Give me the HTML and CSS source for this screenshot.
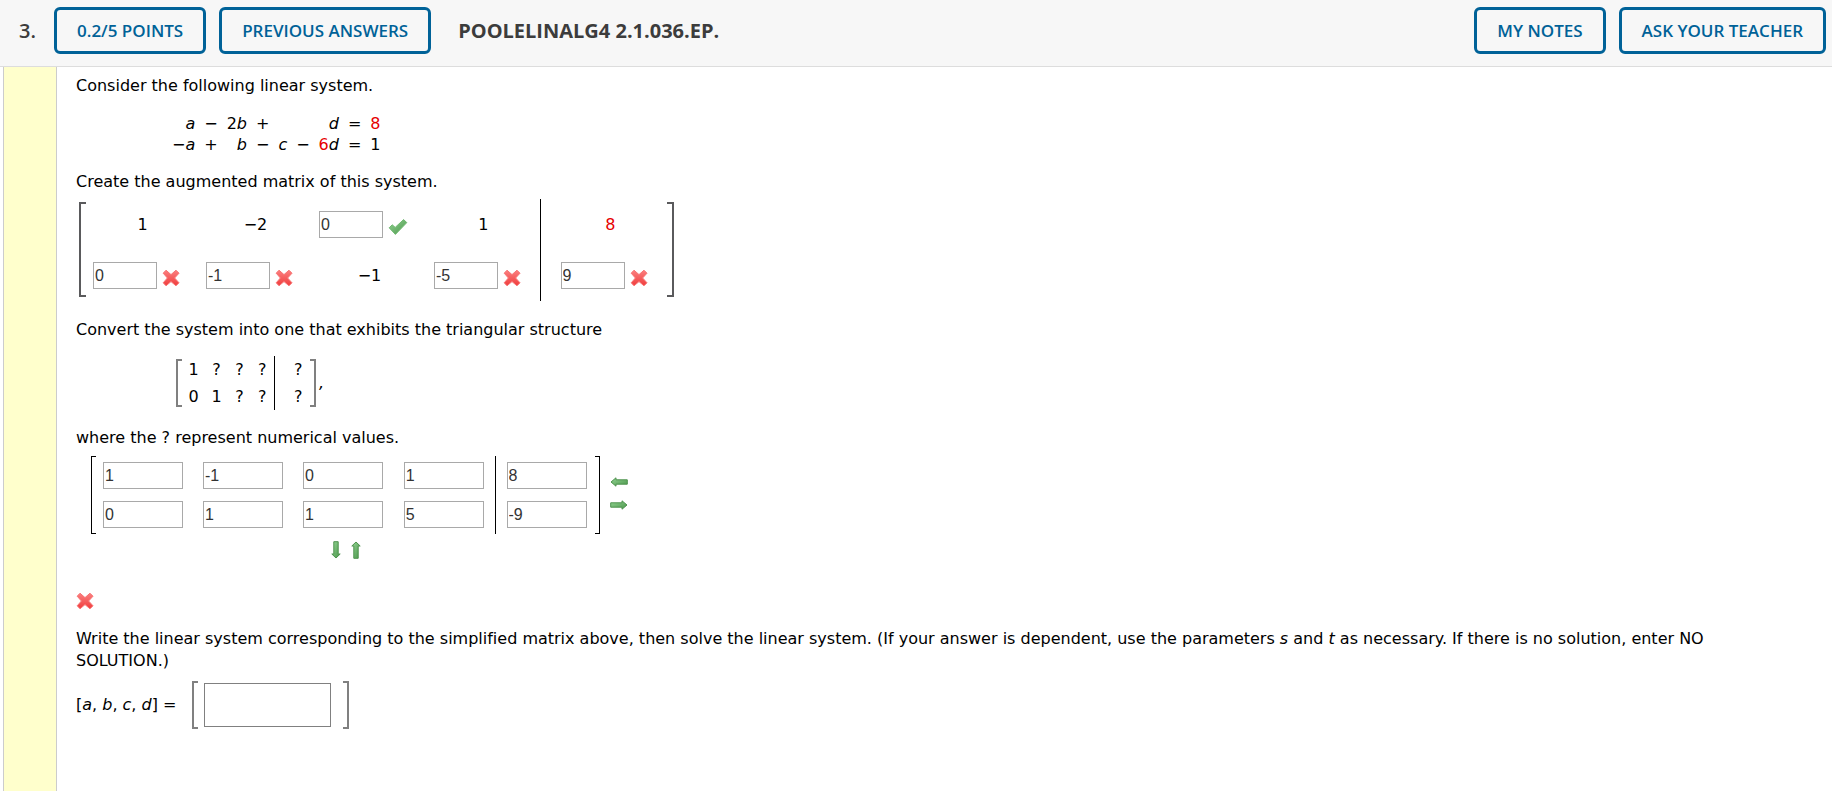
FILE: index.html
```html
<!DOCTYPE html>
<html lang="en">
<head>
    <meta charset="UTF-8">
    <meta name="viewport" content="width=device-width, initial-scale=1.0">
    <title>PooleLinAlg4 2.1.036.EP.</title>
    <link rel="stylesheet" href="styles.css">
</head>
<body>
    <svg class="defs" aria-hidden="true">
        <defs>
            <linearGradient id="red" x1="0" y1="0" x2="0" y2="1">
                <stop offset="0" stop-color="#fb8080"/>
                <stop offset="1" stop-color="#f03c3c"/>
            </linearGradient>
            <linearGradient id="green" x1="0" y1="0" x2="1" y2="1">
                <stop offset="0" stop-color="#93d393"/>
                <stop offset="1" stop-color="#4a964a"/>
            </linearGradient>
            <symbol id="cross" viewBox="0 0 18 18">
                <path d="M4 1.2 9 5.6 14 1.2 17 4.2 12.6 9 17 13.8 14 16.8 9 12.6 4 16.8 1.2 13.8 5.4 9 1.2 4.2Z" fill="url(#red)" stroke="#f87474" stroke-linejoin="round"/>
            </symbol>
            <symbol id="check" viewBox="0 0 20 18">
                <path d="M1.2 9.8 4.2 6.8 7.2 9.4 15.6 1.6 18.8 4.6 7.4 16.4Z" fill="url(#green)" stroke="#6fb86f" stroke-linejoin="round"/>
            </symbol>
            <symbol id="arrow-left" viewBox="0 0 18 10">
                <path d="M1 5 6 .8V2.8H17.3V7.2H6V9.2Z" fill="url(#green)" stroke="#4f934f"/>
            </symbol>
            <symbol id="arrow-right" viewBox="0 0 18 10">
                <path d="M17 5 12 .8V2.8H.7V7.2H12V9.2Z" fill="url(#green)" stroke="#4f934f"/>
            </symbol>
            <symbol id="arrow-down" viewBox="0 0 10 18">
                <path d="M5 17 .8 13H2.8V.7H7.2V13H9.2Z" fill="url(#green)" stroke="#4f934f"/>
            </symbol>
            <symbol id="arrow-up" viewBox="0 0 10 18">
                <path d="M5 1 .8 5H2.8V17.3H7.2V5H9.2Z" fill="url(#green)" stroke="#4f934f"/>
            </symbol>
        </defs>
    </svg>

    <header class="question-header">
        <span class="number">3.</span>
        <button class="header-button" type="button">0.2/5 POINTS</button>
        <button class="header-button" type="button">PREVIOUS ANSWERS</button>
        <h1 class="question-name">POOLELINALG4 2.1.036.EP.</h1>
        <div class="header-tools">
            <button class="header-button" type="button">MY NOTES</button>
            <button class="header-button" type="button">ASK YOUR TEACHER</button>
        </div>
    </header>

    <main class="question">
        <div class="question-margin"></div>
        <div class="question-content">
            <p>Consider the following linear system.</p>
            <table class="system">
                <tr><td><i>a</i></td><td>−</td><td>2<i>b</i></td><td>+</td><td></td><td></td><td><i>d</i></td><td>=</td><td><span class="random">8</span></td></tr>
                <tr><td>−<i>a</i></td><td>+</td><td><i>b</i></td><td>−</td><td><i>c</i></td><td>−</td><td><span class="random">6</span><i>d</i></td><td>=</td><td>1</td></tr>
            </table>

            <p>Create the augmented matrix of this system.</p>
            <div class="matrix matrix-augmented">
                <span class="bracket left"></span>
                <table>
                    <tr>
                        <td>1</td>
                        <td>−2</td>
                        <td class="wide-column"><div class="answer"><input type="text" value="0" aria-label="Row 1, column 3"><svg class="mark-check"><use href="#check"/></svg></div></td>
                        <td>1</td>
                        <td class="augment"><span class="random">8</span></td>
                    </tr>
                    <tr>
                        <td><div class="answer"><input type="text" value="0" aria-label="Row 2, column 1"><svg class="mark"><use href="#cross"/></svg></div></td>
                        <td><div class="answer"><input type="text" value="-1" aria-label="Row 2, column 2"><svg class="mark"><use href="#cross"/></svg></div></td>
                        <td class="wide-column">−1</td>
                        <td><div class="answer"><input type="text" value="-5" aria-label="Row 2, column 4"><svg class="mark"><use href="#cross"/></svg></div></td>
                        <td class="augment"><div class="answer"><input type="text" value="9" aria-label="Row 2, column 5"><svg class="mark"><use href="#cross"/></svg></div></td>
                    </tr>
                </table>
                <span class="bracket right"></span>
            </div>

            <p>Convert the system into one that exhibits the triangular structure</p>
            <div class="matrix matrix-pattern">
                <span class="bracket left"></span>
                <table>
                    <tr><td>1</td><td>?</td><td>?</td><td>?</td><td class="augment">?</td></tr>
                    <tr><td>0</td><td>1</td><td>?</td><td>?</td><td class="augment">?</td></tr>
                </table>
                <span class="bracket right"></span>
                <span class="comma">,</span>
            </div>

            <p>where the ? represent numerical values.</p>
            <div class="matrix matrix-entry">
                <span class="bracket left"></span>
                <table>
                    <tr>
                        <td><input type="text" value="1" aria-label="Row 1, column 1"></td>
                        <td><input type="text" value="-1" aria-label="Row 1, column 2"></td>
                        <td><input type="text" value="0" aria-label="Row 1, column 3"></td>
                        <td class="wide-column"><input type="text" value="1" aria-label="Row 1, column 4"></td>
                        <td class="augment"><input type="text" value="8" aria-label="Row 1, column 5"></td>
                    </tr>
                    <tr>
                        <td><input type="text" value="0" aria-label="Row 2, column 1"></td>
                        <td><input type="text" value="1" aria-label="Row 2, column 2"></td>
                        <td><input type="text" value="1" aria-label="Row 2, column 3"></td>
                        <td class="wide-column"><input type="text" value="5" aria-label="Row 2, column 4"></td>
                        <td class="augment"><input type="text" value="-9" aria-label="Row 2, column 5"></td>
                    </tr>
                </table>
                <span class="bracket right"></span>
                <div class="column-tools">
                    <button class="arrow wide" type="button" aria-label="Remove column"><svg><use href="#arrow-left"/></svg></button>
                    <button class="arrow wide" type="button" aria-label="Add column"><svg><use href="#arrow-right"/></svg></button>
                </div>
            </div>
            <div class="row-tools">
                <button class="arrow tall" type="button" aria-label="Add row"><svg><use href="#arrow-down"/></svg></button>
                <button class="arrow tall" type="button" aria-label="Remove row"><svg><use href="#arrow-up"/></svg></button>
            </div>
            <svg class="mark mark-matrix"><use href="#cross"/></svg>

            <p>Write the linear system corresponding to the simplified matrix above, then solve the linear system. (If your answer is dependent, use the parameters <i>s</i> and <i>t</i> as necessary. If there is no solution, enter NO SOLUTION.)</p>
            <div class="matrix solution">
                <label for="solution">[<i>a</i>, <i>b</i>, <i>c</i>, <i>d</i>] =</label>
                <span class="bracket left"></span>
                <input type="text" id="solution">
                <span class="bracket right"></span>
            </div>
        </div>
    </main>
</body>
</html>
```
FILE: styles.css
```css
* {
    box-sizing: border-box;
}
body {
    margin: 0;
    min-height: 100vh;
    display: flex;
    flex-direction: column;
    background: white;
    color: black;
    font-family: Verdana, "DejaVu Sans", sans-serif;
    font-size: 16px;
    font-variant-ligatures: none;
    line-height: 22px;
}
.defs {
    position: absolute;
    width: 0;
    height: 0;
}

/* header */
.question-header {
    display: flex;
    align-items: center;
    gap: 13px;
    padding: 7px 6px 12px 19px;
    background: #f7f7f7;
    border-bottom: 1px solid #ddd;
    color: #3c3c3c;
    font-family: "Open Sans", sans-serif;
}
.number {
    width: 22px;
    font-size: 20px;
    font-weight: 600;
}
.question-name {
    margin: 0 0 0 14px;
    font-size: 20px;
    font-weight: 700;
}
.header-tools {
    display: flex;
    gap: 13px;
    margin-left: auto;
}
.header-button {
    height: 47px;
    padding: 0 20px;
    border: 3px solid #006298;
    border-radius: 6px;
    background: transparent;
    color: #006298;
    font-family: inherit;
    font-size: 17px;
    font-weight: 600;
    white-space: nowrap;
}

/* question body */
.question {
    flex: 1;
    display: flex;
    padding-left: 3px;
}
.question-margin {
    flex: none;
    width: 54px;
    background: #ffffcc;
    border: solid #ccc;
    border-width: 0 1px;
}
.question-content {
    flex: 1;
    padding: 8px 76px 40px 19px;
}
p {
    margin: 0;
}
.random {
    color: #e60000;
}
table {
    border-collapse: collapse;
}
td {
    padding: 0;
    text-align: center;
}
input {
    display: block;
    width: 64px;
    height: 27px;
    padding: 0 1px;
    border: 1px solid #a9a9a9;
    background: white;
    color: #333;
    font-family: "Liberation Sans", Arial, sans-serif;
    font-size: 16px;
}

.system {
    margin: 16px 0 16px 96px;
    line-height: 21px;
}
.system td {
    padding-right: 9px;
    text-align: right;
}

/* matrices */
.matrix {
    display: flex;
    align-items: center;
}
.bracket {
    align-self: stretch;
    width: 7px;
    border: 2px solid #5a5a5c;
}
.left {
    border-right: none;
}
.right {
    border-left: none;
}
.augment {
    border-left: 1px solid black;
}
.mark {
    width: 18px;
    height: 18px;
}
.mark-check {
    width: 20px;
    height: 18px;
}

.matrix-augmented {
    margin: 6px 0 18px 3px;
}
.matrix-augmented .bracket {
    margin: 3px 0 4px;
}
.matrix-augmented td {
    width: 113px;
    height: 51px;
}
.matrix-augmented .wide-column {
    width: 115px;
}
.matrix-augmented .augment {
    width: 127px;
    padding-left: 13px;
}
.answer {
    display: flex;
    align-items: center;
    gap: 5px;
    padding-left: 7px;
}
.answer svg {
    margin-top: 4px;
}

.matrix-pattern {
    margin: 15px 0 17px 100px;
}
.matrix-pattern .bracket {
    width: 6px;
    margin: 3px 0;
    border-color: #808080;
}
.matrix-pattern td {
    width: 23px;
    height: 27px;
}
.matrix-pattern .augment {
    width: 36px;
    padding-left: 12px;
}
.comma {
    padding-left: 3px;
    font-style: italic;
}

.matrix-entry {
    margin: 7px 0 0 15px;
}
.matrix-entry .bracket {
    width: 5px;
    border-width: 1px;
    border-color: black;
}
.matrix-entry input {
    width: 80px;
    margin: 0 auto;
}
.matrix-entry td {
    width: 100px;
    height: 39px;
}
.matrix-entry td:first-child {
    width: 97px;
}
.matrix-entry td:first-child input {
    margin-left: 7px;
}
.matrix-entry .wide-column {
    width: 102px;
}
.matrix-entry .augment input {
    margin-left: 11px;
}
.column-tools {
    display: flex;
    flex-direction: column;
    gap: 13px;
    margin: 0 0 4px 10px;
}
.row-tools {
    display: flex;
    gap: 10px;
    margin: 7px 0 0 255px;
}
.arrow {
    padding: 0;
    border: none;
    background: none;
}
.arrow svg {
    display: block;
    width: 100%;
    height: 100%;
}
.wide {
    width: 18px;
    height: 10px;
}
.tall {
    width: 10px;
    height: 18px;
}
.mark-matrix {
    display: block;
    margin: 33px 0 18px;
}

.solution {
    margin-top: 9px;
}
.solution .bracket {
    width: 6px;
    height: 48px;
    border-color: #808080;
}
.solution label {
    margin-right: 16px;
}
.solution input {
    width: 127px;
    height: 44px;
    margin: 0 12px 0 6px;
    border-color: #808080;
}
```
